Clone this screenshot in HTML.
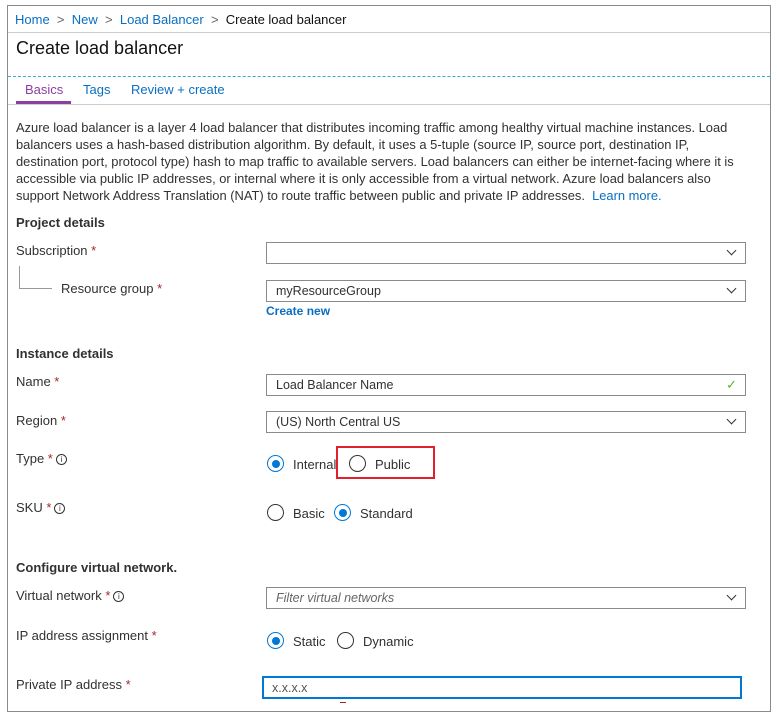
<!DOCTYPE html>
<html><head><meta charset="utf-8"><style>
*{margin:0;padding:0;box-sizing:border-box}
body{width:777px;height:720px;background:#fff;font-family:"Liberation Sans",sans-serif;font-size:13px;color:#323130;position:relative;overflow:hidden}
.a{position:absolute;white-space:nowrap}
.frame{position:absolute;left:7px;top:5px;width:764px;height:707px;border:1px solid #8a8a8a}
.blue{color:#0a6fc2}
.req{color:#a4262c}
.box{position:absolute;border:1px solid #8a8a8a;background:#fff;height:22px;padding-left:9px;line-height:20px;font-size:12.5px}
.chev{position:absolute;right:10px;top:4px;width:7px;height:7px;border-right:1.3px solid #333;border-bottom:1.3px solid #333;transform:rotate(45deg)}
.h{font-weight:bold;font-size:13px;color:#323130}
.rad{position:absolute;width:17px;height:17px;border-radius:50%;border:1px solid #333}
.rad.on{border-color:#0078d4}
.rad.on::after{content:"";position:absolute;left:3.5px;top:3.5px;width:8px;height:8px;border-radius:50%;background:#0078d4}
.info{display:inline-block;width:11px;height:11px;border:1px solid #333;border-radius:50%;font-size:8px;line-height:9px;text-align:center;vertical-align:1px;margin-left:3px}
</style></head><body>
<div class="frame"></div>
<div class="a" style="left:15px;top:12px;font-size:13px"><span class="blue">Home</span> <span style="color:#666">&nbsp;&gt;&nbsp;</span> <span class="blue">New</span> <span style="color:#666">&nbsp;&gt;&nbsp;</span> <span class="blue">Load Balancer</span> <span style="color:#666">&nbsp;&gt;&nbsp;</span> <span style="color:#111">Create load balancer</span></div>
<div class="a" style="left:8px;top:32px;width:762px;border-top:1px solid #ccc"></div>
<div class="a" style="left:16px;top:38px;font-size:18px;color:#111">Create load balancer</div>
<div class="a" style="left:8px;top:76px;width:762px;border-top:1px dashed #3aa9d6"></div>
<div class="a" style="left:25px;top:82px;color:#8b3fa0;font-size:13px">Basics</div>
<div class="a" style="left:83px;top:82px;color:#0a6fc2;font-size:13px">Tags</div>
<div class="a" style="left:131px;top:82px;color:#0a6fc2;font-size:13px">Review + create</div>
<div class="a" style="left:16px;top:101px;width:55px;height:3px;background:#8b3fa0"></div>
<div class="a" style="left:8px;top:104px;width:762px;border-top:1px solid #ccc"></div>
<div class="a" style="left:16px;top:119px;font-size:12.9px;line-height:17px;color:#323130">Azure load balancer is a layer 4 load balancer that distributes incoming traffic among healthy virtual machine instances. Load<br>balancers uses a hash-based distribution algorithm. By default, it uses a 5-tuple (source IP, source port, destination IP,<br>destination port, protocol type) hash to map traffic to available servers. Load balancers can either be internet-facing where it is<br>accessible via public IP addresses, or internal where it is only accessible from a virtual network. Azure load balancers also<br>support Network Address Translation (NAT) to route traffic between public and private IP addresses. &nbsp;<span class="blue">Learn more.</span></div>
<div class="a h" style="left:16px;top:215px">Project details</div>
<div class="a" style="left:16px;top:243px">Subscription <span class="req">*</span></div>
<div class="box" style="left:266px;top:242px;width:480px"><span class="chev"></span></div>
<div class="a" style="left:19px;top:266px;width:33px;height:23px;border-left:1px solid #999;border-bottom:1px solid #999"></div>
<div class="a" style="left:61px;top:281px">Resource group <span class="req">*</span></div>
<div class="box" style="left:266px;top:280px;width:480px">myResourceGroup<span class="chev"></span></div>
<div class="a blue" style="left:266px;top:304px;font-size:12px;font-weight:bold">Create new</div>
<div class="a h" style="left:16px;top:346px">Instance details</div>
<div class="a" style="left:16px;top:374px">Name <span class="req">*</span></div>
<div class="box" style="left:266px;top:374px;width:480px">Load Balancer Name<span class="a" style="right:8px;top:0;color:#5bb02e;font-size:13px">✓</span></div>
<div class="a" style="left:16px;top:413px">Region <span class="req">*</span></div>
<div class="box" style="left:266px;top:411px;width:480px">(US) North Central US<span class="chev"></span></div>
<div class="a" style="left:16px;top:451px">Type <span class="req">*</span><span class="info">i</span></div>
<div class="rad on" style="left:267px;top:455px"></div>
<div class="a" style="left:293px;top:457px">Internal</div>
<div class="a" style="left:336px;top:446px;width:99px;height:33px;border:2px solid #e0202c;background:#fff"></div>
<div class="rad" style="left:349px;top:455px"></div>
<div class="a" style="left:375px;top:457px">Public</div>
<div class="a" style="left:16px;top:500px">SKU <span class="req">*</span><span class="info">i</span></div>
<div class="rad" style="left:267px;top:504px"></div>
<div class="a" style="left:293px;top:506px">Basic</div>
<div class="rad on" style="left:334px;top:504px"></div>
<div class="a" style="left:360px;top:506px">Standard</div>
<div class="a h" style="left:16px;top:560px">Configure virtual network.</div>
<div class="a" style="left:16px;top:588px">Virtual network <span class="req">*</span><span class="info">i</span></div>
<div class="box" style="left:266px;top:587px;width:480px;font-style:italic;color:#666">Filter virtual networks<span class="chev"></span></div>
<div class="a" style="left:16px;top:628px">IP address assignment <span class="req">*</span></div>
<div class="rad on" style="left:267px;top:632px"></div>
<div class="a" style="left:293px;top:634px">Static</div>
<div class="rad" style="left:337px;top:632px"></div>
<div class="a" style="left:363px;top:634px">Dynamic</div>
<div class="a" style="left:16px;top:677px">Private IP address <span class="req">*</span></div>
<div class="box" style="left:262px;top:676px;width:480px;border:2px solid #0078d4;height:23px;padding-left:8px;color:#555">x.x.x.x</div>
<div class="a" style="left:340px;top:702px;width:6px;height:1px;background:#a4262c"></div>
</body></html>
